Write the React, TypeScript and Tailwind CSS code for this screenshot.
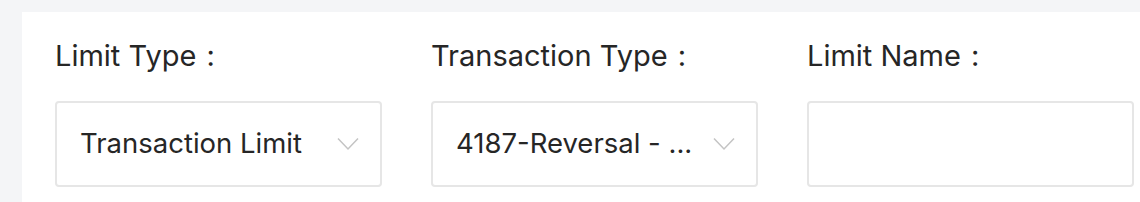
import React from "react";

const font = { fontFamily: "Inter, 'Noto Sans CJK JP', sans-serif" };

function Chevron() {
  return (
    <svg width="22" height="14" viewBox="0 0 22 14" fill="none" className="shrink-0">
      <path d="M1 1.5 L11 12 L21 1.5" stroke="#c4c4c4" strokeWidth="1.5" />
    </svg>
  );
}

function Field({ label, value, select }: { label: string; value?: string; select?: boolean }) {
  return (
    <div className="flex w-[327px] shrink-0 flex-col gap-[25px]">
      <div className="flex h-[40px] items-baseline text-[29px] leading-[40px] text-[#262626] whitespace-nowrap">
        <span>{label}</span>
        <span className="ml-[10px]">:</span>
      </div>
      <div className="flex h-[86px] items-center justify-between rounded-[4px] border-2 border-[#e6e6e6] bg-white pl-[23px] pr-[21px]">
        <span className="text-[27.5px] text-[#262626] whitespace-nowrap">{value ?? ""}</span>
        {select && <Chevron />}
      </div>
    </div>
  );
}

export default function App() {
  return (
    <div className="h-[202px] w-[1140px] overflow-hidden bg-[#f4f5f7] pl-[22px] pt-[12px]" style={font}>
      <div className="flex h-full gap-[49px] bg-white pl-[33px] pt-[24px]">
        <Field label="Limit Type" value="Transaction Limit" select />
        <Field label="Transaction Type" value="4187-Reversal - ..." select />
        <Field label="Limit Name" />
      </div>
    </div>
  );
}
